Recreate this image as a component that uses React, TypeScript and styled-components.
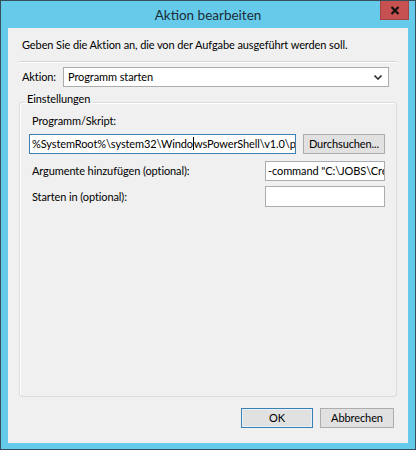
import React from "react";
import styled, { createGlobalStyle } from "styled-components";

const GlobalStyle = createGlobalStyle`
  html, body {
    margin: 0;
    padding: 0;
    background: #ffffff;
  }
  * {
    box-sizing: border-box;
  }
`;

const App: React.FC = () => {
  return (
    <>
      <GlobalStyle />
      <Window>
        <TitleBar>
          <span />
          <Title>Aktion bearbeiten</Title>
          <CloseButton>
            <svg width="10" height="9" viewBox="0 0 10 9">
              <path d="M1.5 1 L8.5 8 M8.5 1 L1.5 8" stroke="#111" strokeWidth="2.2" />
            </svg>
          </CloseButton>
        </TitleBar>
        <Client>
          <Intro>Geben Sie die Aktion an, die von der Aufgabe ausgeführt werden soll.</Intro>
          <Separator />
          <ActionRow>
            <Label>Aktion:</Label>
            <Combo>
              <span>Programm starten</span>
              <svg width="8" height="5" viewBox="0 0 8 5">
                <path d="M0.5 0.5 L4 4 L7.5 0.5" stroke="#333" strokeWidth="1.6" fill="none" />
              </svg>
            </Combo>
          </ActionRow>
          <GroupBox>
            <Legend>Einstellungen</Legend>
            <GroupBody>
              <Label $indent>Programm/Skript:</Label>
              <ScriptRow>
                <TextBox $focused $width={267}>
                  %SystemRoot%\system32\Windo<Caret />wsPowerShell\v1.0\powershell.exe
                </TextBox>
                <Button $width={82}>Durchsuchen...</Button>
              </ScriptRow>
              <FieldRow>
                <Label $indent>Argumente hinzufügen (optional):</Label>
                <TextBox $width={120}>-command "C:\JOBS\CreateReport.ps1"</TextBox>
              </FieldRow>
              <FieldRow>
                <Label $indent>Starten in (optional):</Label>
                <TextBox $width={120} $tall />
              </FieldRow>
            </GroupBody>
          </GroupBox>
          <ButtonRow>
            <Button $width={72} $default>OK</Button>
            <Button $width={74}>Abbrechen</Button>
          </ButtonRow>
        </Client>
      </Window>
    </>
  );
};

export default App;

const uiFont = `"Segoe UI", Lato, "Liberation Sans", Arial, sans-serif`;

const Window = styled.div`
  width: 416px;
  height: 450px;
  border: 1px solid #34505e;
  background: #66cbea;
  display: flex;
  flex-direction: column;
  padding: 0 7px 6px 7px;
  font-family: ${uiFont};
  font-size: 11px;
  letter-spacing: -0.1px;
  color: #000;
`;

const TitleBar = styled.div`
  height: 27px;
  display: grid;
  grid-template-columns: 1fr auto 1fr;
  align-items: start;
`;

const Title = styled.div`
  font-size: 13.5px;
  letter-spacing: 0;
  line-height: 28px;
  color: #1b2d38;
`;

const CloseButton = styled.div`
  justify-self: end;
  width: 29px;
  height: 19px;
  margin-right: -1px;
  background: #c75050;
  border: 1px solid #a54343;
  border-top: none;
  display: flex;
  align-items: center;
  justify-content: center;
`;

const Client = styled.div`
  flex: 1;
  background: #f0f0f0;
  display: flex;
  flex-direction: column;
  padding: 0 11px;
`;

const Intro = styled.div`
  margin-top: 9px;
  padding-left: 3px;
  line-height: 16px;
`;

const Separator = styled.div`
  margin-top: 8px;
  height: 2px;
  border-top: 1px solid #d5d5d5;
  border-bottom: 1px solid #ffffff;
`;

const ActionRow = styled.div`
  margin-top: 4px;
  display: flex;
  align-items: center;
  gap: 7px;
  padding: 0 8px 0 3px;
`;

const Label = styled.div<{ $indent?: boolean }>`
  line-height: 16px;
  padding-left: ${(p) => (p.$indent ? "3px" : "0")};
  white-space: nowrap;
`;

const Combo = styled.div`
  flex: 1;
  height: 20px;
  background: #ffffff;
  border: 1px solid #acacac;
  display: flex;
  align-items: center;
  justify-content: space-between;
  padding: 0 6px 0 4px;
  line-height: 16px;
`;

const GroupBox = styled.fieldset`
  flex: 1;
  margin: 4px 0 0 0;
  padding: 0;
  min-width: 0;
  border: 1px solid #dcdcdc;
  border-radius: 3px;
  box-shadow: inset 1px 1px 0 #ffffff;
`;

const Legend = styled.legend`
  margin-left: 5px;
  padding: 0 2px 6px 2px;
  line-height: 16px;
`;

const GroupBody = styled.div`
  padding: 0 11px 0 9px;
  display: flex;
  flex-direction: column;
`;

const ScriptRow = styled.div`
  margin-top: 5px;
  display: flex;
  align-items: center;
  gap: 7px;
`;

const FieldRow = styled.div`
  margin-top: 7px;
  display: flex;
  align-items: center;
  justify-content: space-between;
  & + & {
    margin-top: 5px;
  }
`;

const TextBox = styled.div<{ $focused?: boolean; $width: number; $tall?: boolean }>`
  width: ${(p) => p.$width}px;
  height: ${(p) => (p.$tall ? 21 : 20)}px;
  background: #ffffff;
  border: 1px solid ${(p) => (p.$focused ? "#3c7fb1" : "#abadb3")};
  padding: 0 2px;
  line-height: 18px;
  white-space: nowrap;
  overflow: hidden;
`;

const Caret = styled.span`
  display: inline-block;
  width: 0;
  height: 13px;
  border-left: 1px solid #000;
  vertical-align: -2px;
`;

const Button = styled.div<{ $width: number; $default?: boolean }>`
  width: ${(p) => p.$width}px;
  height: 20px;
  background: #e1e1e1;
  border: 1px solid ${(p) => (p.$default ? "#3c7fb1" : "#adadad")};
  box-shadow: ${(p) => (p.$default ? "inset 0 0 0 1px #e5f1fb" : "none")};
  display: flex;
  align-items: center;
  justify-content: center;
  line-height: 16px;
`;

const ButtonRow = styled.div`
  margin: 11px 3px 15px 0;
  display: flex;
  justify-content: flex-end;
  gap: 7px;
`;
